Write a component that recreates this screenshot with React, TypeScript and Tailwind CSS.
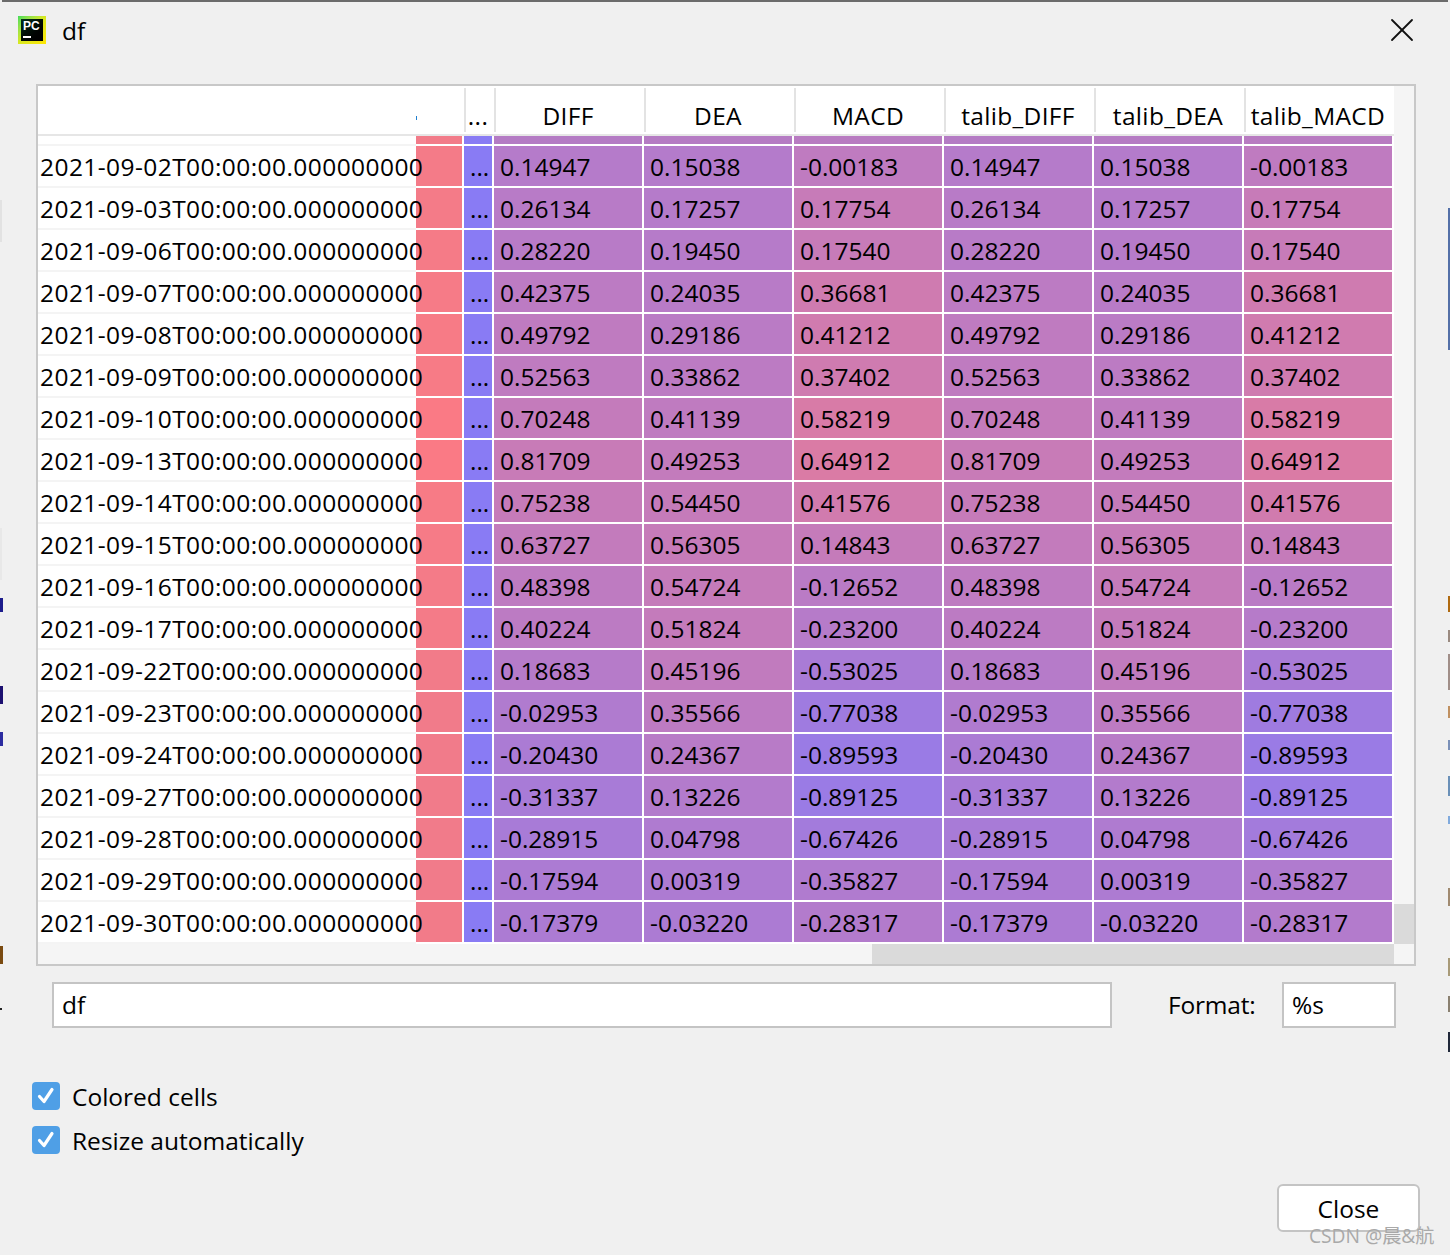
import { X } from 'lucide-react';

type Row = { date: string; red: string; diff: string; dea: string; macd: string };

const rows: Row[] = [
  { date: '02', red: '#f47b88', diff: '0.14947', dea: '0.15038', macd: '-0.00183' },
  { date: '03', red: '#f47b88', diff: '0.26134', dea: '0.17257', macd: '0.17754' },
  { date: '06', red: '#f57b87', diff: '0.28220', dea: '0.19450', macd: '0.17540' },
  { date: '07', red: '#f67b87', diff: '0.42375', dea: '0.24035', macd: '0.36681' },
  { date: '08', red: '#f77b86', diff: '0.49792', dea: '0.29186', macd: '0.41212' },
  { date: '09', red: '#f77b86', diff: '0.52563', dea: '0.33862', macd: '0.37402' },
  { date: '10', red: '#fa7a85', diff: '0.70248', dea: '0.41139', macd: '0.58219' },
  { date: '13', red: '#fa7a85', diff: '0.81709', dea: '0.49253', macd: '0.64912' },
  { date: '14', red: '#f77b86', diff: '0.75238', dea: '0.54450', macd: '0.41576' },
  { date: '15', red: '#f67b87', diff: '0.63727', dea: '0.56305', macd: '0.14843' },
  { date: '16', red: '#f47b88', diff: '0.48398', dea: '0.54724', macd: '-0.12652' },
  { date: '17', red: '#f47b88', diff: '0.40224', dea: '0.51824', macd: '-0.23200' },
  { date: '22', red: '#f27b89', diff: '0.18683', dea: '0.45196', macd: '-0.53025' },
  { date: '23', red: '#f17b8a', diff: '-0.02953', dea: '0.35566', macd: '-0.77038' },
  { date: '24', red: '#f17b8a', diff: '-0.20430', dea: '0.24367', macd: '-0.89593' },
  { date: '27', red: '#f17b8a', diff: '-0.31337', dea: '0.13226', macd: '-0.89125' },
  { date: '28', red: '#f17b8a', diff: '-0.28915', dea: '0.04798', macd: '-0.67426' },
  { date: '29', red: '#f17b8a', diff: '-0.17594', dea: '0.00319', macd: '-0.35827' },
  { date: '30', red: '#f27b89', diff: '-0.17379', dea: '-0.03220', macd: '-0.28317' },
];

// shade between the blue and the red end of the cell colouring
function shade(t: number) {
  const r = Math.round(138 + 110 * t);
  const b = Math.round(245 - 110 * t);
  return `rgb(${r},123,${b})`;
}
const diffColor = (v: string) => shade(0.35 + 0.257 * parseFloat(v));
const deaColor = (v: string) => shade(0.32 + 0.4 * parseFloat(v));
const macdColor = (v: string) => shade(0.484 + 0.379 * parseFloat(v));

const gridCols = 'grid grid-cols-[378px_48px_30px_150px_150px_150px_150px_150px_150px]';

// bits of the window behind the dialog, showing at the screenshot's edges
const edgeMarks = [
  'left-0 top-[200px] w-[2px] h-[42px] bg-[#e2e2e2]',
  'left-0 top-[528px] w-[2px] h-[52px] bg-[#e8e8e8]',
  'left-0 top-[598px] w-[3px] h-[14px] bg-[#1c1c8c]',
  'left-0 top-[686px] w-[3px] h-[18px] bg-[#1c1070]',
  'left-0 top-[732px] w-[3px] h-[14px] bg-[#2c2ca0]',
  'left-0 top-[946px] w-[3px] h-[18px] bg-[#7a4a10]',
  'left-0 top-[1008px] w-[2px] h-[2px] bg-[#222222]',
  'right-0 top-[208px] w-[2px] h-[142px] bg-[#5470a8]',
  'right-0 top-[596px] w-[2px] h-[16px] bg-[#b06a10]',
  'right-0 top-[630px] w-[2px] h-[12px] bg-[#9a8a80]',
  'right-0 top-[654px] w-[2px] h-[36px] bg-[#a08e88]',
  'right-0 top-[706px] w-[2px] h-[12px] bg-[#c09060]',
  'right-0 top-[740px] w-[2px] h-[10px] bg-[#7a90b8]',
  'right-0 top-[776px] w-[2px] h-[20px] bg-[#6a90b8]',
  'right-0 top-[816px] w-[2px] h-[8px] bg-[#80aadd]',
  'right-0 top-[888px] w-[2px] h-[18px] bg-[#a08a70]',
  'right-0 top-[958px] w-[2px] h-[18px] bg-[#a89a78]',
  'right-0 top-[996px] w-[2px] h-[16px] bg-[#8a8070]',
  'right-0 top-[1032px] w-[2px] h-[20px] bg-[#20283a]',
];

function HeaderCell({ label }: { label: string }) {
  return (
    <div className="py-[2px]">
      <div className="h-full flex items-end justify-center pr-[4px] leading-[32px] tracking-[0.33px] border-l-2 border-[#e3e3e3]">
        {label}
      </div>
    </div>
  );
}

function Cell({ value, color }: { value: string; color: string }) {
  return (
    <div className="border-r-2 border-b-2 border-white pl-[6px] flex items-center pt-[2px]" style={{ backgroundColor: color }}>
      {value}
    </div>
  );
}

function Checkbox({ label }: { label: string }) {
  return (
    <div className="flex items-center gap-[12px] h-[28px]">
      <div className="w-[28px] h-[28px] rounded-[4px] bg-[#4f9fe6] flex items-center justify-center">
        <svg width="20" height="20" viewBox="0 0 20 20" fill="none">
          <path d="M3.5 10.5 L8 15.5 L16 3.5" stroke="white" strokeWidth="3.2" strokeLinecap="round" strokeLinejoin="round" />
        </svg>
      </div>
      <span className="pt-[2px]">{label}</span>
    </div>
  );
}

export default function App() {
  return (
    <div className="relative w-[1450px] h-[1255px] overflow-hidden bg-[#f0f0f0] text-black text-[24.5px] font-['Open_Sans','Noto_Sans',sans-serif]">
      <div className="mx-[2px] h-[2px] bg-[#6b6b6b]" />

      {/* Title bar */}
      <div className="h-[82px] flex items-start">
        <div className="ml-[18px] mt-[14px] w-[28px] h-[28px] bg-linear-to-br from-[#3ddc5a] via-[#d8e820] to-[#ffe600] flex items-center justify-center">
          <div className="relative w-[22px] h-[22px] bg-linear-to-br from-[#03301c] to-black pl-[2px] pt-[2px]">
            <div className="text-white text-[12px] font-bold leading-[11px] font-['Liberation_Sans',sans-serif]">PC</div>
            <div className="mt-[4px] w-[8px] h-[2px] bg-white" />
          </div>
        </div>
        <div className="ml-[16px] mt-[11px] leading-[36px]">df</div>
        <X className="ml-auto mr-[28px] mt-[8px] w-[40px] h-[40px] text-[#111111]" strokeWidth={1.1} />
      </div>

      {/* Table frame */}
      <div className="ml-[36px] w-[1380px] h-[882px] border-2 border-[#c8c8c8] bg-[#f5f5f5]">
        <div className="flex h-[858px]">
          <div className="w-[1356px]">
            <div className={`${gridCols} h-[50px] bg-white border-b-2 border-[#e6e6e6]`}>
              <div />
              <div className="relative">
                <div className="absolute left-0 top-[30px] w-[1px] h-[4px] bg-[#2080d0]" />
              </div>
              <HeaderCell label="..." />
              <HeaderCell label="DIFF" />
              <HeaderCell label="DEA" />
              <HeaderCell label="MACD" />
              <HeaderCell label="talib_DIFF" />
              <HeaderCell label="talib_DEA" />
              <HeaderCell label="talib_MACD" />
            </div>

            {/* Partly scrolled-off row */}
            <div className={`${gridCols} h-[10px]`}>
              <div className="bg-white border-b-2 border-[#f4f4f4]" />
              <Cell value="" color="#f27b89" />
              <Cell value="" color="#897bf4" />
              <Cell value="" color="#b47bc4" />
              <Cell value="" color="#b57bc3" />
              <Cell value="" color="#b87bc1" />
              <Cell value="" color="#b47bc4" />
              <Cell value="" color="#b57bc3" />
              <Cell value="" color="#b87bc1" />
            </div>

            {rows.map((row) => (
              <div key={row.date} className={`${gridCols} h-[42px]`}>
                <div className="relative z-10 bg-white border-b-2 border-[#f4f4f4] pl-[2px] flex items-center pt-[2px] whitespace-nowrap tracking-[0.43px]">
                  2021-09-{row.date}T00:00:00.000000000
                </div>
                <div className="border-r-2 border-b-2 border-white" style={{ backgroundColor: row.red }} />
                <Cell value="..." color="#897bf4" />
                <Cell value={row.diff} color={diffColor(row.diff)} />
                <Cell value={row.dea} color={deaColor(row.dea)} />
                <Cell value={row.macd} color={macdColor(row.macd)} />
                <Cell value={row.diff} color={diffColor(row.diff)} />
                <Cell value={row.dea} color={deaColor(row.dea)} />
                <Cell value={row.macd} color={macdColor(row.macd)} />
              </div>
            ))}
          </div>

          {/* Vertical scrollbar */}
          <div className="w-[20px] flex flex-col justify-end">
            <div className="h-[40px] bg-[#dadada]" />
          </div>
        </div>

        {/* Horizontal scrollbar */}
        <div className="w-[1356px] h-[20px] flex justify-end">
          <div className="w-[522px] bg-[#dadada]" />
        </div>
      </div>

      {/* Name and format */}
      <div className="mt-[16px] h-[46px] flex items-center pl-[52px]">
        <div className="w-[1060px] h-full border-2 border-[#c4c4c4] bg-white pl-[8px] flex items-center">df</div>
        <div className="ml-[56px] w-[114px] tracking-[-0.2px]">Format:</div>
        <div className="w-[114px] h-full border-2 border-[#c4c4c4] bg-white pl-[8px] flex items-center">%s</div>
      </div>

      {/* Options */}
      <div className="mt-[54px] ml-[32px] flex flex-col gap-[16px]">
        <Checkbox label="Colored cells" />
        <Checkbox label="Resize automatically" />
      </div>

      <div className="mt-[30px] pr-[30px] flex justify-end">
        <button className="w-[143px] h-[48px] rounded-[6px] border-2 border-[#c4c4c4] bg-white pt-[2px]">Close</button>
      </div>

      <div className="absolute left-[1309px] top-[1224px] text-[19.2px] leading-[24px] text-[#a9a9a9] whitespace-nowrap font-['Open_Sans','Noto_Sans_CJK_SC',sans-serif]">
        CSDN @晨&航
      </div>

      {edgeMarks.map((mark) => (
        <div key={mark} className={`absolute ${mark}`} />
      ))}
    </div>
  );
}
